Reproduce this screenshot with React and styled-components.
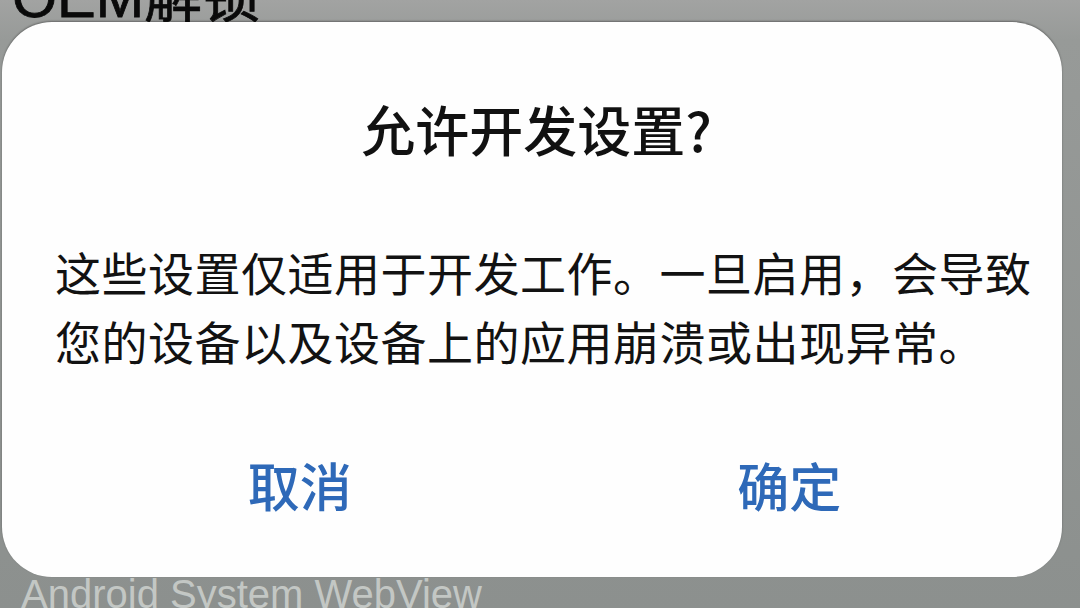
import React from "react";
import styled, { createGlobalStyle } from "styled-components";

const GlobalStyle = createGlobalStyle`
  html, body {
    margin: 0;
    padding: 0;
    background: #8d918f;
    overflow: hidden;
  }
`;

const Screen = styled.div`
  width: 1080px;
  height: 608px;
  display: flex;
  flex-direction: column;
  background: linear-gradient(#a2a3a2 0px, #979a98 40px, #8c908e 100%);
  font-family: "Liberation Sans", "Noto Sans CJK SC", sans-serif;
  overflow: hidden;
`;

const TopStrip = styled.div`
  height: 22px;
  flex-shrink: 0;
  overflow: hidden;
  padding-left: 12px;
`;

const PageTitle = styled.div`
  margin-top: -32px;
  font-size: 58px;
  line-height: 58px;
  color: #0a0a0a;
  white-space: nowrap;
  -webkit-text-stroke: 0.8px #0a0a0a;
`;

const Dialog = styled.div`
  height: 555px;
  flex-shrink: 0;
  margin: 0 18px 0 2px;
  box-sizing: border-box;
  padding: 75px 28px 61px 53px;
  background: #fefefe;
  border-radius: 50px;
  box-shadow: 0 -1px 2px rgba(0, 0, 0, 0.35);
  display: flex;
  flex-direction: column;
  font-family: "Noto Sans CJK SC", sans-serif;
`;

const Title = styled.div`
  font-size: 54px;
  line-height: 64px;
  font-weight: 500;
  color: #111;
  text-align: center;
  margin: 0 16px 76px 0;
`;

const Message = styled.div`
  font-size: 46px;
  line-height: 69px;
  color: #121212;
  margin-bottom: 80px;
`;

const Line = styled.div`
  white-space: nowrap;
  letter-spacing: 0.5px;
`;

const Actions = styled.div`
  display: flex;
`;

const Action = styled.button`
  flex: 1;
  border: none;
  background: none;
  padding: 0;
  font-family: "Noto Sans CJK SC", sans-serif;
  font-size: 52px;
  line-height: 60px;
  font-weight: 500;
  color: #2e69b8;
  text-align: center;
  cursor: pointer;
`;

const BottomStrip = styled.div`
  flex: 1;
  overflow: hidden;
  padding-left: 21px;
`;

const PageFooter = styled.div`
  margin-top: -3px;
  font-size: 40px;
  line-height: 40px;
  color: #c3c7c4;
  white-space: nowrap;
`;

export default function App() {
  return (
    <>
      <GlobalStyle />
      <Screen>
        <TopStrip>
          <PageTitle>OEM解锁</PageTitle>
        </TopStrip>
        <Dialog>
          <Title>允许开发设置?</Title>
          <Message>
            <Line>这些设置仅适用于开发工作。一旦启用，会导致</Line>
            <Line>您的设备以及设备上的应用崩溃或出现异常。</Line>
          </Message>
          <Actions>
            <Action>取消</Action>
            <Action>确定</Action>
          </Actions>
        </Dialog>
        <BottomStrip>
          <PageFooter>Android System WebView</PageFooter>
        </BottomStrip>
      </Screen>
    </>
  );
}
